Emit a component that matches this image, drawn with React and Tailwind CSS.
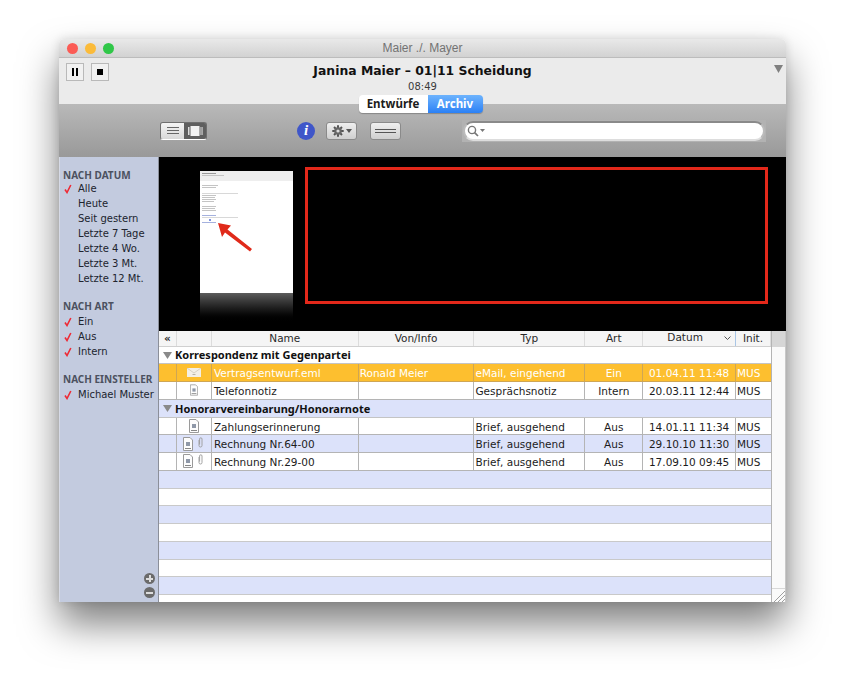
import React from "react";

const dv = "font-['DejaVu_Sans',sans-serif]";
const ns = "font-['Noto_Sans',sans-serif]";

function Check() {
  return (
    <svg width="8" height="10" viewBox="0 0 8 10" className="shrink-0">
      <path d="M1 5.5 L3 8.5 L6.8 1" fill="none" stroke="#ee2a35" strokeWidth="1.6" />
    </svg>
  );
}

function FilterItem({ on, children }) {
  return (
    <div className="flex items-center h-[15px] pl-[4px]">
      <span className="w-[14px] flex items-center">{on && <Check />}</span>
      <span className="text-[10px] leading-[15px] text-[#20242e]">{children}</span>
    </div>
  );
}

function FilterHead({ children, className = "" }) {
  return <div className={`pl-[3px] text-[10px] leading-[13px] font-bold text-[#4c5160] whitespace-nowrap ${ns} ${className}`}>{children}</div>;
}

function Doc({ big }) {
  const w = big ? 10 : 8;
  const h = big ? 14 : 12;
  return (
    <svg width={w} height={h} viewBox="0 0 10 14">
      <path d="M0.5 0.5 H7 L9.5 3 V13.5 H0.5 Z" fill="#fdfdfd" stroke="#9a9a9a" />
      <rect x="3" y="5" width="4" height="4" fill="#8f98a8" />
      <rect x="2" y="11" width="6" height="1" fill="#888" />
    </svg>
  );
}

function Clip() {
  return (
    <svg width="5" height="11" viewBox="0 0 5 11">
      <path d="M1 3 V8.5 A1.5 1.5 0 0 0 4 8.5 V2 A1.2 1.2 0 0 0 1.6 2 V7.5" fill="none" stroke="#9a9a9a" strokeWidth="0.9" />
    </svg>
  );
}

function Mail() {
  return (
    <svg width="14" height="9" viewBox="0 0 14 9">
      <rect width="14" height="9" fill="#f3efe6" />
      <path d="M0 0 L7 5 L14 0" fill="none" stroke="#d6d0c4" />
      <rect x="5.5" y="6" width="3" height="1" fill="#b8b2a6" />
    </svg>
  );
}

const cols = ["w-[18px]", "w-[35px]", "w-[147px]", "w-[116px]", "w-[111px]", "w-[58px]", "w-[93px]", "w-[35px]"];

function Row({ bg = "bg-white", text = "text-[#1c1c1c]", line = "border-[#b4b4b4]", icon, c = [] }) {
  return (
    <div className={`flex h-[17.75px] border-b ${line} ${bg} ${text} text-[10.5px] leading-[18px] whitespace-nowrap`}>
      <div className={`${cols[0]} border-r ${line}`} />
      <div className={`${cols[1]} border-r ${line} flex items-center justify-center`}>{icon}</div>
      <div className={`${cols[2]} border-r ${line} pl-[2px] overflow-hidden`}>{c[0]}</div>
      <div className={`${cols[3]} border-r ${line} pl-[1px] overflow-hidden`}>{c[1]}</div>
      <div className={`${cols[4]} border-r ${line} pl-[1px] overflow-hidden`}>{c[2]}</div>
      <div className={`${cols[5]} border-r ${line} text-center`}>{c[3]}</div>
      <div className={`${cols[6]} border-r ${line} text-center`}>{c[4]}</div>
      <div className={`${cols[7]} pl-[1px] overflow-hidden`}>{c[5]}</div>
    </div>
  );
}

function Group({ bg, children }) {
  return (
    <div className={`flex items-center h-[17.75px] border-b border-[#c4c4c4] ${bg} pl-[4px] gap-[3px] pt-[1px] text-[11px] leading-[16px] font-bold text-[#111] whitespace-nowrap ${ns}`}>
      <svg width="9" height="7" viewBox="0 0 9 7"><path d="M0 0 H9 L4.5 7 Z" fill="#8a8a8a" /></svg>
      {children}
    </div>
  );
}

function Head({ w, className = "", children }) {
  return <div className={`${w} border-r border-[#dcdcdc] text-center overflow-hidden ${className}`}>{children}</div>;
}

function Line({ w, c = "bg-[#888]" }) {
  return <div className={`h-px ${w} ${c} mb-[2px]`} />;
}

function Thumb({ w, c = "bg-[#c4c4c4]" }) {
  return <div className={`h-px ${w} ${c}`} />;
}

export default function App() {
  return (
    <div className={`w-[845px] h-[684px] bg-white overflow-hidden pt-[39px] pl-[59px] ${dv}`}>
      <div className="w-[727px] h-[563px] flex flex-col rounded-t-[5px] overflow-hidden shadow-[0_22px_38px_rgba(0,0,0,0.5),0_0_10px_rgba(0,0,0,0.12)] bg-white">
        {/* title bar */}
        <div className="relative h-[19px] shrink-0 flex items-center justify-center bg-gradient-to-b from-[#e9e9e9] to-[#d2d2d2] border-b border-[#bcbcbc]">
          <div className="absolute left-[8px] top-[4px] flex gap-[7px]">
            <span className="w-[11px] h-[11px] rounded-full bg-[#fb5b55]" />
            <span className="w-[11px] h-[11px] rounded-full bg-[#fbbb3a]" />
            <span className="w-[11px] h-[11px] rounded-full bg-[#30c748]" />
          </div>
          <span className="font-['Liberation_Sans',sans-serif] text-[12px] text-[#737373]">Maier ./. Mayer</span>
        </div>

        {/* header panel */}
        <div className="relative h-[46px] shrink-0 bg-[#ebebeb] flex flex-col items-center pt-[4px] z-10">
          <div className="absolute left-[7px] top-[5px] flex gap-[7px]">
            <button className="w-[18px] h-[18px] bg-[#f1f1f1] border border-[#b9b9b9] flex items-center justify-center gap-[2px]">
              <span className="w-[2px] h-[8px] bg-black" /><span className="w-[2px] h-[8px] bg-black" />
            </button>
            <button className="w-[18px] h-[18px] bg-[#f1f1f1] border border-[#b9b9b9] flex items-center justify-center">
              <span className="w-[6px] h-[6px] bg-black" />
            </button>
          </div>
          <div className="shrink-0 text-[12.4px] leading-[17px] font-bold text-[#111]">Janina Maier – 01|11 Scheidung</div>
          <div className="shrink-0 text-[10px] leading-[13px] mt-[1px] text-[#3a3a3a]">08:49</div>
          <div className={`shrink-0 flex h-[18px] mt-[2px] mr-[4px] rounded-[4px] overflow-hidden text-[11.5px] leading-[18px] font-bold shadow-[0_1px_1px_rgba(0,0,0,0.25)] ${ns}`}>
            <div className="w-[69px] bg-white text-center text-[#1c1c1c]">Entwürfe</div>
            <div className="w-[55px] bg-gradient-to-b from-[#6db3fd] to-[#2a80f5] text-center text-white">Archiv</div>
          </div>
          <svg className="absolute right-[3px] top-[7px]" width="9" height="8" viewBox="0 0 9 8"><path d="M0 0 H9 L4.5 8 Z" fill="#808080" /></svg>
        </div>

        {/* toolbar */}
        <div className="h-[53px] shrink-0 bg-gradient-to-b from-[#b9b9b9] to-[#999999] flex items-center pl-[101px]">
          <div className="flex w-[47px] h-[18px] rounded-[3px] overflow-hidden border border-[#6f6f6f] border-b-white">
            <div className="w-[23px] bg-gradient-to-b from-[#f4f4f4] to-[#d8d8d8] flex flex-col items-center justify-center pt-[2px]">
              <Line w="w-[12px]" c="bg-[#666]" /><Line w="w-[12px]" c="bg-[#666]" /><Line w="w-[12px]" c="bg-[#666]" />
            </div>
            <div className="flex-1 bg-[#5f5f5f] flex items-center justify-center">
              <svg width="15" height="10" viewBox="0 0 15 10">
                <rect x="0" y="1" width="1.5" height="8" fill="#ddd" /><rect x="2.5" y="0" width="9" height="10" fill="#f2f2f2" /><rect x="12.5" y="1" width="1" height="8" fill="#ddd" /><rect x="14" y="1" width="1" height="8" fill="#aaa" />
              </svg>
            </div>
          </div>
          <div className="ml-[90px] w-[18px] h-[18px] rounded-full bg-[#3f56c9] flex items-center justify-center text-white font-['Liberation_Serif',serif] italic font-bold text-[15px] leading-none">i</div>
          <div className="ml-[11px] w-[31px] h-[18px] rounded-[3px] bg-gradient-to-b from-[#efefef] to-[#cfcfcf] border border-[#8a8a8a] flex items-center justify-center gap-[2px]">
            <svg width="12" height="12" viewBox="0 0 12 12">
              <g stroke="#555" strokeWidth="2">
                <path d="M6 0.3 V11.7" /><path d="M0.3 6 H11.7" /><path d="M2 2 L10 10" /><path d="M10 2 L2 10" />
              </g>
              <circle cx="6" cy="6" r="3.8" fill="#666" /><circle cx="6" cy="6" r="1.6" fill="#ddd" />
            </svg>
            <svg width="6" height="4" viewBox="0 0 6 4"><path d="M0 0 H6 L3 4 Z" fill="#555" /></svg>
          </div>
          <div className="ml-[13px] w-[31px] h-[18px] rounded-[3px] bg-gradient-to-b from-[#efefef] to-[#cfcfcf] border border-[#8a8a8a] flex flex-col items-center justify-center pt-[2px]">
            <Line w="w-[21px]" c="bg-[#555]" /><Line w="w-[21px]" c="bg-[#555]" />
          </div>
          <div className="ml-[61px] w-[304px] h-[22px] bg-[#b2b2b2] flex items-center justify-center">
            <div className="w-[302px] h-[20px] rounded-full bg-white border-2 border-[#8a8a8a] border-b-[#ddd] border-x-[#bbb] flex items-center pl-[2px] gap-[1px]">
              <svg width="12" height="12" viewBox="0 0 12 12"><circle cx="5" cy="5" r="3.6" fill="none" stroke="#777" strokeWidth="1.4" /><path d="M7.6 7.6 L11 11" stroke="#777" strokeWidth="1.7" /></svg>
              <svg width="5" height="3" viewBox="0 0 5 3"><path d="M0 0 H5 L2.5 3 Z" fill="#777" /></svg>
            </div>
          </div>
        </div>

        {/* body */}
        <div className="flex-1 min-h-0 flex">
          {/* sidebar */}
          <div className="w-[100px] shrink-0 bg-[#c3cbdf] border-l border-l-[#d6dae6] border-r border-r-[#8b8f99] pt-[12px] pb-[4px] flex flex-col">
            <FilterHead className="mb-[-1px]">NACH DATUM</FilterHead>
            <FilterItem on>Alle</FilterItem>
            <FilterItem>Heute</FilterItem>
            <FilterItem>Seit gestern</FilterItem>
            <FilterItem>Letzte 7 Tage</FilterItem>
            <FilterItem>Letzte 4 Wo.</FilterItem>
            <FilterItem>Letzte 3 Mt.</FilterItem>
            <FilterItem>Letzte 12 Mt.</FilterItem>
            <FilterHead className="mt-[14px] mb-[1px]">NACH ART</FilterHead>
            <FilterItem on>Ein</FilterItem>
            <FilterItem on>Aus</FilterItem>
            <FilterItem on>Intern</FilterItem>
            <FilterHead className="mt-[14px] mb-[1px]">NACH EINSTELLER</FilterHead>
            <FilterItem on>Michael Muster</FilterItem>
            <div className="mt-auto self-end mr-[3px] flex flex-col gap-[3px]">
              <span className="relative w-[11px] h-[11px] rounded-full bg-[#6b6b6b] flex items-center justify-center">
                <span className="w-[7px] h-[2px] bg-[#ddd]" />
                <span className="absolute w-[2px] h-[7px] bg-[#ddd]" />
              </span>
              <span className="w-[11px] h-[11px] rounded-full bg-[#6b6b6b] flex items-center justify-center">
                <span className="w-[7px] h-[2px] bg-[#ddd]" />
              </span>
            </div>
          </div>

          {/* content */}
          <div className="flex-1 min-w-0 flex flex-col">
            {/* preview */}
            <div className="h-[174px] shrink-0 bg-black flex pl-[41px] pt-[14px]">
              <div className="w-[93px] shrink-0 flex flex-col">
                <div className="relative h-[122px] bg-white flex flex-col">
                  <div className="h-[10px] bg-[#eeeeee] pl-[2px] pt-[2px] flex flex-col gap-[1px]">
                    <Thumb w="w-[14px]" c="bg-[#999]" />
                    <Thumb w="w-[22px]" />
                  </div>
                  <div className="pl-[2px] pt-[4px] flex flex-col gap-[1px]">
                    <Thumb w="w-[16px]" />
                    <Thumb w="w-[14px]" />
                    <div className="h-[3px]" />
                    <Thumb w="w-[36px]" c="bg-[#d8d8d8]" />
                    <Thumb w="w-[14px]" />
                    <Thumb w="w-[13px]" />
                    <Thumb w="w-[14px]" />
                    <Thumb w="w-[12px]" />
                    <div className="h-[2px]" />
                    <Thumb w="w-[14px]" />
                    <Thumb w="w-[13px]" />
                    <Thumb w="w-[14px]" />
                    <div className="h-[2px]" />
                    <Thumb w="w-[14px]" c="bg-[#a5b1de]" />
                    <Thumb w="w-[36px]" c="bg-[#d8d8d8]" />
                    <div className="h-[2px] w-[2px] bg-[#7d92e0] ml-[7px]" />
                    <Thumb w="w-[14px]" c="bg-[#a5b1de]" />
                  </div>
                  <svg className="absolute left-[17px] top-[51px]" width="37" height="31" viewBox="0 0 37 31">
                    <path d="M1 1 L14 3.5 L10.5 7.5 L35 27 L33 29.5 L8 10.5 L5 15 Z" fill="#e02a1a" />
                  </svg>
                </div>
                <div className="h-[30px] bg-gradient-to-b from-[#5c5c5c] to-black" />
              </div>
              <div className="ml-[12px] mt-[-4px] w-[463px] h-[137px] border-[3px] border-[#e3281a]" />
            </div>

            {/* table */}
            <div className="flex-1 min-h-0 flex">
              <div className="w-[613px] shrink-0 flex flex-col overflow-hidden border-r border-[#b4b4b4]">
                <div className="flex h-[15.5px] shrink-0 bg-[#f5f5f5] border-b border-[#d0d0d0] text-[10.5px] leading-[14px] text-[#2a2a2a] whitespace-nowrap">
                  <Head w={cols[0]} className="font-bold">«</Head>
                  <Head w={cols[1]} />
                  <Head w={cols[2]}>Name</Head>
                  <Head w={cols[3]}>Von/Info</Head>
                  <Head w={cols[4]}>Typ</Head>
                  <Head w={cols[5]}>Art</Head>
                  <div className={`${cols[6]} relative border-r border-[#a9c6e6] text-center pr-[8px] leading-[12px]`}>
                    Datum
                    <svg className="absolute right-[4px] top-[5px]" width="7" height="4" viewBox="0 0 7 4"><path d="M0.5 0.5 L3.5 3.5 L6.5 0.5" fill="none" stroke="#555" /></svg>
                  </div>
                  <Head w={cols[7]}>Init.</Head>
                </div>
                <Group bg="bg-white">Korrespondenz mit Gegenpartei</Group>
                <Row bg="bg-[#fdbf2f]" text="text-white" line="border-[#cfa654]" icon={<Mail />} c={["Vertragsentwurf.eml", "Ronald Meier", "eMail, eingehend", "Ein", "01.04.11 11:48", "MUS"]} />
                <Row icon={<Doc />} c={["Telefonnotiz", "", "Gesprächsnotiz", "Intern", "20.03.11 12:44", "MUS"]} />
                <Group bg="bg-[#dce2fa]">Honorarvereinbarung/Honorarnote</Group>
                <Row icon={<Doc big />} c={["Zahlungserinnerung", "", "Brief, ausgehend", "Aus", "14.01.11 11:34", "MUS"]} />
                <Row bg="bg-[#dce2fa]" icon={<span className="flex items-start gap-[5px] pr-[1px]"><Doc big /><Clip /></span>} c={["Rechnung Nr.64-00", "", "Brief, ausgehend", "Aus", "29.10.10 11:30", "MUS"]} />
                <Row icon={<span className="flex items-start gap-[5px] pr-[1px]"><Doc big /><Clip /></span>} c={["Rechnung Nr.29-00", "", "Brief, ausgehend", "Aus", "17.09.10 09:45", "MUS"]} />
                {["bg-[#dce2fa]", "bg-white", "bg-[#dce2fa]", "bg-white", "bg-[#dce2fa]", "bg-white", "bg-[#dce2fa]", "bg-white"].map((b, i) => (
                  <div key={i} className={`h-[17.75px] shrink-0 border-b border-[#c9c9c9] ${b}`} />
                ))}
              </div>
              <div className="flex-1 min-w-0 flex flex-col bg-[#fafafa] border-r border-[#c8c8c8]">
                <div className="h-[15.5px] bg-[#d6d6d6]" />
                <div className="flex-1" />
                <div className="h-[14px] border-t border-[#d8d8d8] flex items-end justify-end">
                  <svg width="12" height="12" viewBox="0 0 12 12">
                    <path d="M1 12 L12 1 M5 12 L12 5 M9 12 L12 9" stroke="#9f9f9f" strokeWidth="1" fill="none" />
                  </svg>
                </div>
              </div>
            </div>
          </div>
        </div>
      </div>
    </div>
  );
}
